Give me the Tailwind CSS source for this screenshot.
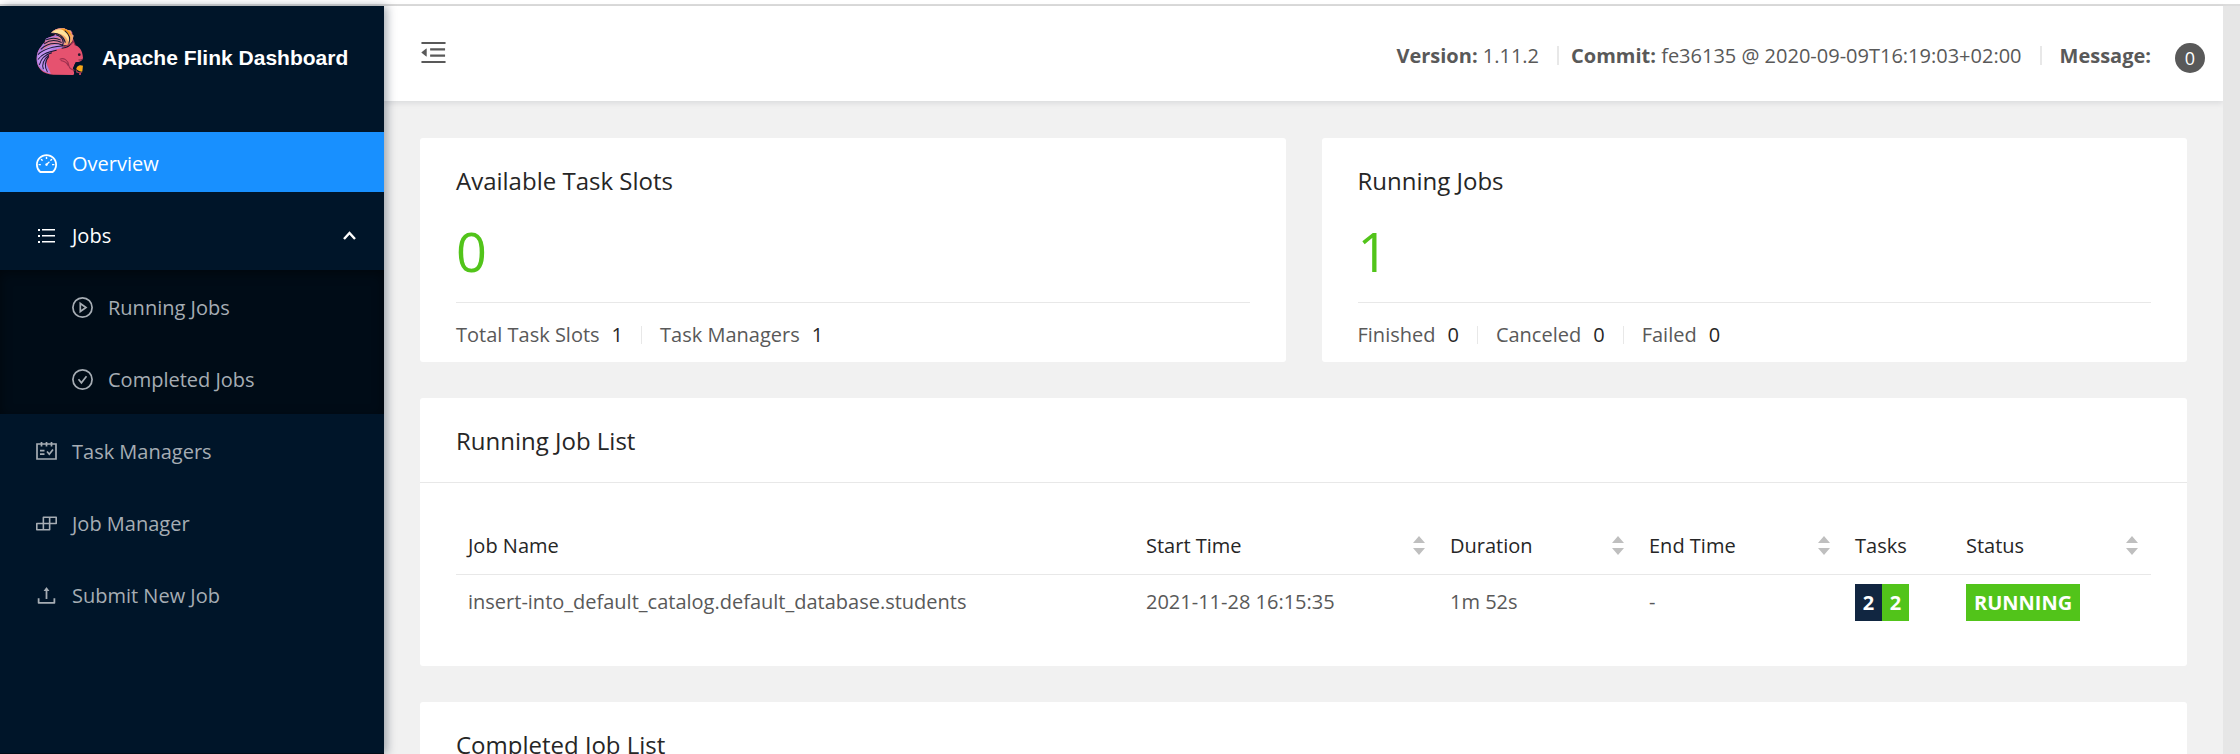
<!DOCTYPE html>
<html lang="en">
  <head>
    <meta charset="utf-8" />
    <meta name="viewport" content="width=device-width,initial-scale=1.0" />
    <title>Apache Flink Web Dashboard</title>
    <script src="https://cdn.jsdelivr.net/npm/@tailwindcss/browser@4"></script>
    <style>
      body {
        font-family: "Segoe UI", "Open Sans", "Noto Sans", sans-serif;
      }
    </style>
  </head>
  <body class="flex h-screen flex-col overflow-hidden bg-white text-[20px] leading-[30px] text-[#595959]">
    <div class="h-[6px] shrink-0 border-b-2 border-[#dcdcdc]"></div>
    <div class="flex min-h-0 flex-1">
      <!-- Sidebar -->
      <aside class="z-10 w-96 shrink-0 border-b border-[#000c17] bg-[#001529] text-[#a6adb4] shadow-[3px_0_9px_rgba(0,21,41,0.35)]">
        <a href="#" class="flex h-24 items-center gap-[18px] pt-2 pl-9 text-white">
          <svg class="mb-3 size-12" viewBox="0 0 140 142" fill="none">
            <path d="M50 138C18 138 1 118 1 92C1 76 5 65 13 56C18 48 24 47 26 38C29 28 43 27 58 20L44 15C53 3 67 0 82 1L106 12L109 40L115 51C126 54 137 66 138 88C137 98 126 101 116 101L108 120L112 133L110 139Z" fill="#e6526f" />
            <path d="M44 15C53 3 66 0 82 1L90 5L103 8L104 18L110 22L106 40C94 54 75 60 57 64C39 69 24 86 31 108L43 135C18 132 1 116 1 91C1 75 6 64 15 54L20 46L26 45L28 32C36 26 49 27 59 19C55 15 49 14 44 15Z" fill="#b07ce0" />
            <path d="M44 15C53 3 66 0 82 1L90 5L103 8L104 18L110 22L106 42C98 50 89 51 78 53C84 41 76 29 59 20C55 15 49 14 44 15Z" fill="#f3a66d" />
            <path d="M44 15C54 2 76 1 86 10C97 20 98 32 95 41C88 24 76 14 44 15Z" fill="#ffe29a" />
            <path d="M72 2C88 0 102 11 105 24L97 17L102 33C95 19 86 9 72 2Z" fill="#f59b1c" />
            <path d="M28 39C40 27 61 26 76 26C89 36 87 49 74 56C57 47 39 48 20 66Z" fill="#dc829c" />
            <path d="M4 84C20 60 48 44 79 49C49 57 24 72 22 96C22 111 32 123 39 132C18 127 3 110 4 84Z" fill="#c293ef" />
            <path d="M42 16C65 12 81 24 86 43M58 20C78 25 84 41 76 55M84 8C98 19 102 32 96 47M29 35C43 29 60 29 72 36M23 47C41 34 60 36 75 43M13 63C34 43 57 43 77 50M5 79C23 60 54 54 90 52M5 93C19 72 44 69 60 66M9 109C15 86 31 77 46 73M21 122C15 106 25 90 37 80M33 130C23 116 25 98 37 84M75 60C91 58 103 50 108 39" stroke="#181936" stroke-width="3" />
            <path d="M69 93C81 86 94 96 96 110C98 122 106 126 120 124M72 96C84 98 92 104 95 113M80 56L106 45L109 36L115 51" stroke="#9c304e" stroke-width="3" />
            <path d="M116 102L109 119L116 127L118 119Z" fill="#001529" />
            <circle cx="127" cy="79" r="4" fill="#241b2d" />
            <path d="M125 94C130 96 134 94 137 92" stroke="#732a42" stroke-width="3" />
            <path d="M122 114C128 108 134 110 138 112L136 129C127 130 120 124 118 119Z" fill="#f7a719" />
            <path d="M118 124C124 132 130 132 137 130L132 134V139H126L127 134L118 132Z" fill="#ba405d" />
          </svg>
          <h1 class="font-['Liberation_Sans',Arial,sans-serif] text-[21px] font-semibold">Apache Flink Dashboard</h1>
        </a>
        <nav class="pt-6">
          <ul>
            <li class="my-[6px]">
              <a href="#" class="flex h-[60px] items-center gap-[15px] bg-[#1890ff] pt-[3px] pl-9 text-white">
                <svg class="size-[21px]" viewBox="64 64 896 896" fill="currentColor">
                  <path d="M924.8 385.6a446.7 446.7 0 0 0-96-142.4 446.7 446.7 0 0 0-142.4-96C631.1 123.8 572.5 112 512 112s-119.1 11.8-174.4 35.2a446.7 446.7 0 0 0-142.4 96 446.7 446.7 0 0 0-96 142.4C75.8 440.9 64 499.5 64 560c0 132.7 58.3 257.7 159.9 343.1l1.7 1.4c5.8 4.8 13.1 7.5 20.6 7.5h531.7c7.5 0 14.8-2.7 20.6-7.5l1.7-1.4C901.7 817.7 960 692.7 960 560c0-60.5-11.9-119.1-35.2-174.4zM761.4 836H262.6A371.12 371.12 0 0 1 140 560c0-99.4 38.7-192.8 109-263 70.3-70.3 163.7-109 263-109 99.4 0 192.8 38.7 263 109 70.3 70.3 109 163.7 109 263 0 105.6-44.5 205.5-122.6 276zM623.5 421.5a8.03 8.03 0 0 0-11.3 0L527.7 506c-18.7-5-39.4-.2-54.1 14.5a55.95 55.95 0 0 0 0 79.2 55.95 55.95 0 0 0 79.2 0 55.87 55.87 0 0 0 14.5-54.1l84.5-84.5c3.1-3.1 3.1-8.2 0-11.3l-28.3-28.3zM490 320h44c4.4 0 8-3.6 8-8v-80c0-4.4-3.6-8-8-8h-44c-4.4 0-8 3.6-8 8v80c0 4.4 3.6 8 8 8zm260 218v44c0 4.4 3.6 8 8 8h80c4.4 0 8-3.6 8-8v-44c0-4.4-3.6-8-8-8h-80c-4.4 0-8 3.6-8 8zm12.7-197.2l-31.1-31.1a8.03 8.03 0 0 0-11.3 0l-56.6 56.6a8.03 8.03 0 0 0 0 11.3l31.1 31.1c3.1 3.1 8.2 3.1 11.3 0l56.6-56.6c3.1-3.1 3.1-8.2 0-11.3zm-458.6-31.1a8.03 8.03 0 0 0-11.3 0l-31.1 31.1a8.03 8.03 0 0 0 0 11.3l56.6 56.6c3.1 3.1 8.2 3.1 11.3 0l31.1-31.1c3.1-3.1 3.1-8.2 0-11.3l-56.6-56.6zM262 530h-80c-4.4 0-8 3.6-8 8v44c0 4.4 3.6 8 8 8h80c4.4 0 8-3.6 8-8v-44c0-4.4-3.6-8-8-8z" />
                </svg>
                Overview
              </a>
            </li>
            <li class="mt-3 mb-[6px]">
              <button type="button" aria-expanded="true" class="flex h-[60px] w-full items-center gap-[15px] pt-[3px] pr-[28px] pl-9 text-left text-white">
                <svg class="size-[21px]" viewBox="0 0 21 21" fill="currentColor">
                  <path d="M6 4H19V5.500H6ZM6 10H19V11.500H6ZM6 16H19V17.500H6ZM2 4H4V6H2ZM2 10H4V12H2ZM2 16H4V18H2Z" />
                </svg>
                <span class="flex-1">Jobs</span>
                <svg class="h-[9px] w-[13px]" viewBox="0 0 13 9" fill="none" stroke="currentColor" stroke-width="2.4"><path d="M1 8L6.500 2L12 8" /></svg>
              </button>
            </li>
            <li class="bg-[#000c17] py-[6px] shadow-[inset_0_3px_12px_rgba(0,0,0,0.45)]">
              <ul class="flex flex-col gap-3">
                <li>
                  <a href="#" class="flex h-[60px] items-center gap-[15px] pt-[3px] pl-[72px]">
                    <svg class="size-[21px]" viewBox="0 0 21 21" fill="none" stroke="currentColor" stroke-width="1.7"><circle cx="10.500" cy="10.500" r="9.600" /><path d="M8.300 6.500V14.500L14 10.500Z" /></svg>
                    Running Jobs
                  </a>
                </li>
                <li>
                  <a href="#" class="flex h-[60px] items-center gap-[15px] pt-[3px] pl-[72px]">
                    <svg class="size-[21px]" viewBox="0 0 21 21" fill="none" stroke="currentColor" stroke-width="1.7"><circle cx="10.500" cy="10.500" r="9.600" /><path d="M6.500 10.300L9.400 13.800L14.500 7.200" /></svg>
                    Completed Jobs
                  </a>
                </li>
              </ul>
            </li>
            <li class="mt-[6px]">
              <a href="#" class="flex h-[60px] items-center gap-[15px] pt-[3px] pl-9">
                <svg class="size-[21px]" viewBox="0 0 21 21" fill="none" stroke="currentColor" stroke-width="1.7"><path d="M1 3H20V18H1ZM5.500 1V5.500M10.500 1V5.500M15.500 1V5.500M4 9.700H8.500M4 13.200H8.500M11 10.500L13.300 13.200L17 8.500" /></svg>
                Task Managers
              </a>
            </li>
            <li class="mt-3">
              <a href="#" class="flex h-[60px] items-center gap-[15px] pt-[3px] pl-9">
                <svg class="size-[21px]" viewBox="64 64 896 896" fill="currentColor">
                  <path d="M928 210H376c-17.700 0-32 14.300-32 32v236H96c-17.700 0-32 14.300-32 32v272c0 17.700 14.300 32 32 32h552c17.700 0 32-14.300 32-32V546h248c17.700 0 32-14.300 32-32V242c0-17.700-14.300-32-32-32zm-516 68h200v200H412V278zm-68 468H132V546h212v200zm268 0H412V546h200v200zm280-268H680V278h212v200z" />
                </svg>
                Job Manager
              </a>
            </li>
            <li class="mt-3">
              <a href="#" class="flex h-[60px] items-center gap-[15px] pt-[3px] pl-9">
                <svg class="size-[21px]" viewBox="64 64 896 896" fill="currentColor">
                  <path d="M400 317.700h73.900V656c0 4.400 3.600 8 8 8h60c4.400 0 8-3.600 8-8V317.700H624c6.700 0 10.400-7.700 6.300-12.900L518.300 163a8 8 0 0 0-12.600 0l-112 141.700c-4.100 5.300-.4 13 6.300 13zM878 626h-60c-4.400 0-8 3.600-8 8v154H214V634c0-4.400-3.600-8-8-8h-60c-4.400 0-8 3.600-8 8v198c0 17.700 14.300 32 32 32h684c17.700 0 32-14.300 32-32V634c0-4.400-3.600-8-8-8z" />
                </svg>
                Submit New Job
              </a>
            </li>
          </ul>
        </nav>
      </aside>

      <div class="flex min-w-0 flex-1 flex-col bg-[#f1f1f1]">
        <header class="flex h-[95px] shrink-0 items-center justify-between bg-white pr-[18px] pl-9 shadow-[0_2px_6px_rgba(0,21,41,0.1)]">
          <button type="button" aria-label="Collapse menu" class="pb-[2px]">
            <svg class="size-[27px]" viewBox="64 64 896 896" fill="currentColor">
              <path d="M408 442h480c4.400 0 8-3.600 8-8v-56c0-4.400-3.600-8-8-8H408c-4.400 0-8 3.600-8 8v56c0 4.400 3.600 8 8 8zm-8 204c0 4.400 3.600 8 8 8h480c4.400 0 8-3.600 8-8v-56c0-4.400-3.600-8-8-8H408c-4.400 0-8 3.600-8 8v56zm504-486H120c-4.400 0-8 3.600-8 8v56c0 4.400 3.600 8 8 8h784c4.400 0 8-3.600 8-8v-56c0-4.400-3.600-8-8-8zm0 632H120c-4.400 0-8 3.600-8 8v56c0 4.400 3.600 8 8 8h784c4.400 0 8-3.600 8-8v-56c0-4.400-3.600-8-8-8zM115.400 518.900L271.700 642c5.800 4.600 14.400.5 14.400-6.900V388.900c0-7.400-8.500-11.500-14.400-6.900L115.400 505.100a8.740 8.740 0 0 0 0 13.800z" />
            </svg>
          </button>
          <div class="flex items-center pt-1">
            <span><strong class="font-bold">Version:</strong> 1.11.2</span>
            <span class="mr-3 ml-[18px] h-[19px] w-[2px] bg-[#e8e8e8]"></span>
            <span><strong class="font-bold">Commit:</strong> fe36135 @ 2020-09-09T16:19:03+02:00</span>
            <span class="mx-[18px] h-[19px] w-[2px] bg-[#e8e8e8]"></span>
            <strong class="font-bold">Message:</strong>
            <span class="mt-1 ml-6 flex size-[30px] items-center justify-center rounded-full bg-[#595959] text-[18px] text-white">0</span>
          </div>
        </header>

        <main class="flex min-h-0 flex-1 flex-col gap-9 overflow-hidden px-9 pt-[37px]">
          <div class="grid shrink-0 grid-cols-2 gap-9">
            <section class="rounded-[3px] bg-white px-9 pt-7 pb-3">
              <h2 class="text-[24px] font-medium text-[#262626]">Available Task Slots</h2>
              <p class="mt-[10px] h-24 text-[54px] leading-[90px] text-[#52c41a]">0</p>
              <div class="flex items-center border-t border-[#e8e8e8] pt-[17px]">
                <span>Total Task Slots</span>
                <span class="ml-3 font-medium text-[#262626]">1</span>
                <span class="mx-[18px] h-[18px] w-px bg-[#e8e8e8]"></span>
                <span>Task Managers</span>
                <span class="ml-3 font-medium text-[#262626]">1</span>
              </div>
            </section>
            <section class="rounded-[3px] bg-white px-9 pt-7 pb-3">
              <h2 class="text-[24px] font-medium text-[#262626]">Running Jobs</h2>
              <p class="mt-[10px] h-24 text-[54px] leading-[90px] text-[#52c41a]">1</p>
              <div class="flex items-center border-t border-[#e8e8e8] pt-[17px]">
                <span>Finished</span>
                <span class="ml-3 font-medium text-[#262626]">0</span>
                <span class="mx-[18px] h-[18px] w-px bg-[#e8e8e8]"></span>
                <span>Canceled</span>
                <span class="ml-3 font-medium text-[#262626]">0</span>
                <span class="mx-[18px] h-[18px] w-px bg-[#e8e8e8]"></span>
                <span>Failed</span>
                <span class="ml-3 font-medium text-[#262626]">0</span>
              </div>
            </section>
          </div>

          <section class="shrink-0 rounded-[3px] bg-white">
            <h2 class="border-b border-[#e8e8e8] px-9 pt-7 pb-[26px] text-[24px] font-medium text-[#262626]">Running Job List</h2>
            <div class="px-9 pt-9 pb-9">
              <table class="w-full table-fixed text-left">
                <colgroup>
                  <col />
                  <col class="w-[304px]" />
                  <col class="w-[199px]" />
                  <col class="w-[206px]" />
                  <col class="w-[111px]" />
                  <col class="w-[197px]" />
                </colgroup>
                <thead class="text-[#262626]">
                  <tr class="h-[55px] border-b border-[#e8e8e8]">
                    <th class="px-3 font-medium">Job Name</th>
                    <th class="px-3 font-medium">
                      <button type="button" class="flex w-full items-center justify-between pr-px">
                        Start Time
                        <svg class="h-5 w-3" viewBox="0 0 12 20" fill="#bfbfbf"><path d="M6 0L12 7H0ZM6 19L0 12H12Z" /></svg>
                      </button>
                    </th>
                    <th class="px-3 font-medium">
                      <button type="button" class="flex w-full items-center justify-between pr-px">
                        Duration
                        <svg class="h-5 w-3" viewBox="0 0 12 20" fill="#bfbfbf"><path d="M6 0L12 7H0ZM6 19L0 12H12Z" /></svg>
                      </button>
                    </th>
                    <th class="px-3 font-medium">
                      <button type="button" class="flex w-full items-center justify-between pr-px">
                        End Time
                        <svg class="h-5 w-3" viewBox="0 0 12 20" fill="#bfbfbf"><path d="M6 0L12 7H0ZM6 19L0 12H12Z" /></svg>
                      </button>
                    </th>
                    <th class="px-3 font-medium">Tasks</th>
                    <th class="px-3 font-medium">
                      <button type="button" class="flex w-full items-center justify-between pr-px">
                        Status
                        <svg class="h-5 w-3" viewBox="0 0 12 20" fill="#bfbfbf"><path d="M6 0L12 7H0ZM6 19L0 12H12Z" /></svg>
                      </button>
                    </th>
                  </tr>
                </thead>
                <tbody>
                  <tr class="h-14">
                    <td class="px-3">insert-into_default_catalog.default_database.students</td>
                    <td class="px-3">2021-11-28 16:15:35</td>
                    <td class="px-3">1m 52s</td>
                    <td class="px-3">-</td>
                    <td class="px-3">
                      <div class="flex text-center leading-[37px] font-bold text-white">
                        <span class="w-[27px] bg-[#112641]">2</span>
                        <span class="w-[27px] bg-[#52c41a]">2</span>
                      </div>
                    </td>
                    <td class="px-3">
                      <span class="block w-fit bg-[#52c41a] px-2 leading-[37px] font-bold text-white">RUNNING</span>
                    </td>
                  </tr>
                </tbody>
              </table>
            </div>
          </section>

          <section class="shrink-0 rounded-[3px] bg-white">
            <h2 class="border-b border-[#e8e8e8] px-9 pt-7 pb-[26px] text-[24px] font-medium text-[#262626]">Completed Job List</h2>
          </section>
        </main>
      </div>

      <!-- Scroll track -->
      <div class="w-[17px] shrink-0 bg-[#e6e6e6]"></div>
    </div>
  </body>
</html>
